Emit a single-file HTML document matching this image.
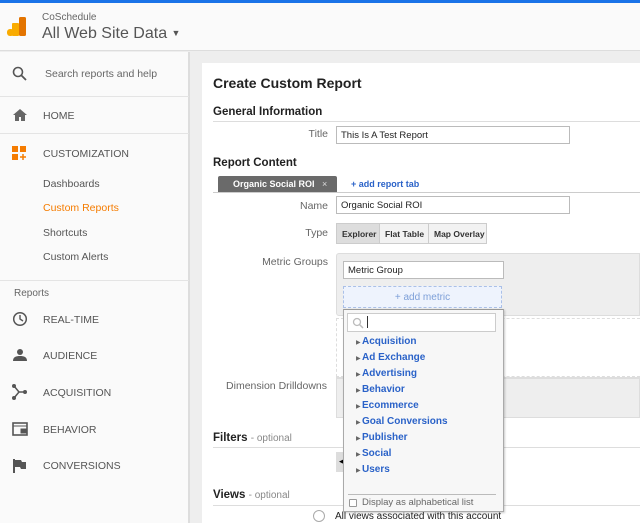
<!DOCTYPE html>
<html><head><meta charset="utf-8"><style>
*{margin:0;padding:0;box-sizing:border-box}
body{width:640px;height:523px;overflow:hidden;position:relative;font-family:"Liberation Sans",sans-serif;background:#eeeeee}
.a{position:absolute;white-space:nowrap}
.nav{font-size:10.5px;color:#555;left:43px}
.sub{font-size:10.5px;color:#555;left:43px}
.lbl{font-size:10.5px;color:#666;text-align:right;width:120px;left:208px}
.inp{border:1px solid #bbb;background:#fff;font-size:9.5px;color:#222;padding:3px 4px;height:18px}
.it{font-size:10px;font-weight:bold;color:#2a62c8;left:362px}
.tri{font-size:6px;color:#666;left:356px}
.ic{position:absolute;left:12px}
</style></head><body>
<div class="a" style="left:0;top:0;width:640px;height:3px;background:#1a73e8"></div>
<div class="a" style="left:0;top:3px;width:640px;height:48px;background:#fafafa;border-bottom:1px solid #ddd"></div>
<svg class="a" style="left:7px;top:17px" width="20" height="20"><rect x="0" y="12" width="7" height="7" rx="3" fill="#f9ab00"/><rect x="5" y="6" width="7" height="13" rx="1" fill="#f9ab00"/><rect x="12" y="0" width="7" height="19" rx="1.5" fill="#e37400"/></svg>
<div class="a" style="left:42px;top:12px;font-size:10px;color:#666">CoSchedule</div>
<div class="a" style="left:42px;top:25px;font-size:16px;color:#555">All Web Site Data <span style="font-size:9px;vertical-align:2px">▼</span></div>
<div class="a" style="left:0;top:52px;width:190px;height:471px;background:#fafafa;border-right:2px solid #ddd"></div>
<svg class="ic" style="top:66px" width="16" height="16"><circle cx="6" cy="6" r="4.5" fill="none" stroke="#555" stroke-width="1.6"/><path d="M9.5 9.5L14 14" stroke="#555" stroke-width="1.8"/></svg>
<div class="a" style="left:45px;top:68px;font-size:10.5px;color:#666">Search reports and help</div>
<div class="a" style="left:0;top:96px;width:189px;height:1px;background:#e4e4e4"></div>
<svg class="ic" style="top:108px" width="16" height="14"><path d="M8 1L1 7h2v6h4V9h2v4h4V7h2z" fill="#666"/></svg>
<div class="a nav" style="top:110px">HOME</div>
<div class="a" style="left:0;top:133px;width:189px;height:1px;background:#e4e4e4"></div>
<svg class="ic" style="top:146px" width="16" height="16"><rect x="0" y="0" width="6" height="6" fill="#f57c00"/><rect x="8" y="0" width="6" height="6" fill="#f57c00"/><rect x="0" y="8" width="6" height="6" fill="#f57c00"/><path d="M11 8v6M8 11h6" stroke="#f57c00" stroke-width="1.5"/></svg>
<div class="a nav" style="top:148px">CUSTOMIZATION</div>
<div class="a sub" style="top:178px">Dashboards</div>
<div class="a sub" style="top:202px;color:#f57c00">Custom Reports</div>
<div class="a sub" style="top:227px">Shortcuts</div>
<div class="a sub" style="top:251px">Custom Alerts</div>
<div class="a" style="left:0;top:280px;width:189px;height:1px;background:#e4e4e4"></div>
<div class="a" style="left:14px;top:288px;font-size:10px;color:#666">Reports</div>
<svg class="ic" style="top:311px" width="16" height="16"><circle cx="8" cy="8" r="6.3" fill="none" stroke="#555" stroke-width="1.5"/><path d="M8 4v4l3 2" stroke="#555" stroke-width="1.4" fill="none"/></svg>
<div class="a nav" style="top:314px">REAL-TIME</div>
<svg class="ic" style="top:348px" width="16" height="14"><circle cx="8" cy="4" r="3" fill="#555"/><path d="M1 13c0-4 3-5 7-5s7 1 7 5z" fill="#555"/></svg>
<div class="a nav" style="top:350px">AUDIENCE</div>
<svg class="ic" style="top:384px" width="16" height="16"><path d="M2 2L7 8L2 14M7 8h7" stroke="#555" stroke-width="1.5" fill="none"/><circle cx="2" cy="2" r="2" fill="#555"/><circle cx="2" cy="14" r="2" fill="#555"/><circle cx="13" cy="8" r="2" fill="#555"/></svg>
<div class="a nav" style="top:387px">ACQUISITION</div>
<svg class="ic" style="top:422px" width="16" height="14"><rect x="1" y="1" width="14" height="12" fill="none" stroke="#555" stroke-width="1.6"/><path d="M1 4h14M9 7h5v4H9z" fill="#555" stroke="#555"/></svg>
<div class="a nav" style="top:424px">BEHAVIOR</div>
<svg class="ic" style="top:458px" width="16" height="16"><path d="M2 1v14" stroke="#555" stroke-width="2"/><path d="M3 2h6l1 2h4v7H9l-1-2H3z" fill="#555"/></svg>
<div class="a nav" style="top:460px">CONVERSIONS</div>

<div class="a" style="left:202px;top:63px;width:438px;height:460px;background:#fff"></div>
<div class="a" style="left:213px;top:75px;font-size:14px;font-weight:bold;color:#222">Create Custom Report</div>
<div class="a" style="left:213px;top:106px;font-size:11.5px;font-weight:bold;color:#222">General Information</div>
<div class="a" style="left:213px;top:121px;width:427px;height:1px;background:#ddd"></div>
<div class="a lbl" style="top:128px;left:208px">Title</div>
<div class="a inp" style="left:336px;top:126px;width:234px">This Is A Test Report</div>
<div class="a" style="left:213px;top:157px;font-size:11.5px;font-weight:bold;color:#222">Report Content</div>
<div class="a" style="left:218px;top:176px;width:119px;height:16px;background:#6a6a6a;border-radius:2px 2px 0 0;color:#fff;font-size:9px;font-weight:bold;padding:3px 0 0 15px">Organic Social ROI &nbsp; <span style="font-weight:normal;color:#ddd">×</span></div>
<div class="a" style="left:351px;top:179px;font-size:9px;font-weight:bold;color:#2a62c8">+ add report tab</div>
<div class="a" style="left:213px;top:192px;width:427px;height:1px;background:#ccc"></div>
<div class="a lbl" style="top:200px">Name</div>
<div class="a inp" style="left:336px;top:196px;width:234px">Organic Social ROI</div>
<div class="a lbl" style="top:227px">Type</div>
<div class="a" style="left:336px;top:223px;width:151px;height:21px;border:1px solid #ccc;background:#f2f2f2;font-size:8.5px;font-weight:bold;color:#333">
<span class="a" style="left:0;top:0;width:43px;height:19px;background:#ddd;border-right:1px solid #ccc;padding:5px 0 0 5px">Explorer</span>
<span class="a" style="left:44px;top:0;width:48px;height:19px;border-right:1px solid #ccc;padding:5px 0 0 4px">Flat Table</span>
<span class="a" style="left:93px;top:0;padding:5px 0 0 4px">Map Overlay</span></div>
<div class="a lbl" style="top:256px">Metric Groups</div>
<div class="a" style="left:336px;top:253px;width:304px;height:63px;background:#eee;border:1px solid #ddd;border-radius:3px 0 0 3px"></div>
<div class="a inp" style="left:343px;top:261px;width:161px;height:18px">Metric Group</div>
<div class="a" style="left:343px;top:286px;width:159px;height:22px;background:#eef3fd;border:1px dashed #aac0e8;color:#7d9fd8;font-size:10px;text-align:center;padding-top:5px">+ add metric</div>
<div class="a" style="left:336px;top:318px;width:304px;height:59px;border-top:1px dashed #ddd;border-bottom:1px dashed #ddd;border-left:1px dashed #ddd"></div>
<div class="a" style="left:336px;top:377px;width:304px;height:2px;background:#ddd"></div>
<div class="a lbl" style="top:380px;left:207px">Dimension Drilldowns</div>
<div class="a" style="left:336px;top:378px;width:304px;height:40px;background:#eee;border:1px solid #ddd"></div>
<div class="a" style="left:213px;top:432px;font-size:11.5px;color:#222"><b>Filters</b> <span style="font-size:10px;color:#888">- optional</span></div>
<div class="a" style="left:213px;top:447px;width:427px;height:1px;background:#ddd"></div>
<div class="a" style="left:336px;top:452px;width:12px;height:20px;background:#ddd;font-size:9px;padding:4px 0 0 3px">◂</div>
<div class="a" style="left:213px;top:489px;font-size:11.5px;color:#222"><b>Views</b> <span style="font-size:10px;color:#888">- optional</span></div>
<div class="a" style="left:213px;top:505px;width:427px;height:1px;background:#ddd"></div>
<div class="a" style="left:313px;top:510px;width:12px;height:12px;border:1px solid #aaa;border-radius:50%"></div>
<div class="a" style="left:335px;top:511px;font-size:10px;color:#222">All views associated with this account</div>

<div class="a" style="left:343px;top:309px;width:161px;height:203px;background:#f7f7f7;border:1px solid #aaa;border-top-color:#999;box-shadow:1px 1px 2px rgba(0,0,0,.2)"></div>
<div class="a" style="left:347px;top:313px;width:149px;height:19px;background:#fff;border:1px solid #ccc"></div>
<svg class="a" style="left:352px;top:317px" width="12" height="12"><circle cx="5" cy="5" r="3.5" fill="none" stroke="#bbb" stroke-width="1.3"/><path d="M7.5 7.5L11 11" stroke="#bbb" stroke-width="1.5"/></svg>
<div class="a" style="left:367px;top:316px;width:1px;height:12px;background:#333"></div>
<div class="a tri" style="top:339px">▶</div><div class="a it" style="top:336px">Acquisition</div>
<div class="a tri" style="top:355px">▶</div><div class="a it" style="top:352px">Ad Exchange</div>
<div class="a tri" style="top:371px">▶</div><div class="a it" style="top:368px">Advertising</div>
<div class="a tri" style="top:387px">▶</div><div class="a it" style="top:384px">Behavior</div>
<div class="a tri" style="top:403px">▶</div><div class="a it" style="top:400px">Ecommerce</div>
<div class="a tri" style="top:419px">▶</div><div class="a it" style="top:416px">Goal Conversions</div>
<div class="a tri" style="top:435px">▶</div><div class="a it" style="top:432px">Publisher</div>
<div class="a tri" style="top:451px">▶</div><div class="a it" style="top:448px">Social</div>
<div class="a tri" style="top:467px">▶</div><div class="a it" style="top:464px">Users</div>
<div class="a" style="left:348px;top:494px;width:148px;height:1px;background:#bbb"></div>
<div class="a" style="left:349px;top:499px;width:8px;height:8px;border:1px solid #999;background:#fff;border-radius:1px"></div>
<div class="a" style="left:362px;top:497px;font-size:9.5px;color:#666">Display as alphabetical list</div>
</body></html>
